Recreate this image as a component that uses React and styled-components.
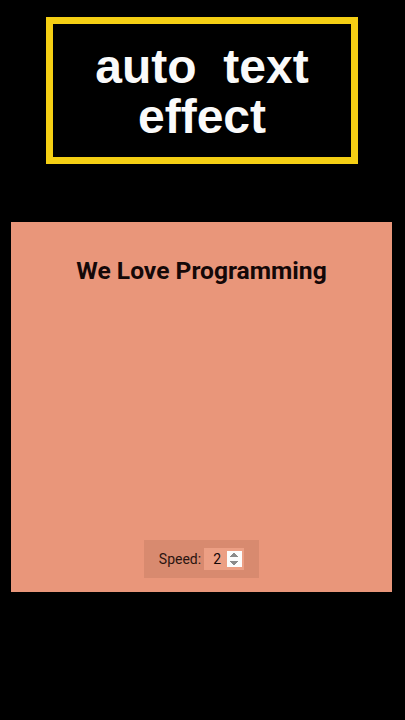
import styled, { createGlobalStyle } from "styled-components";

const GlobalStyle = createGlobalStyle`
  html, body {
    margin: 0;
    padding: 0;
    background: #000;
  }
  body {
    font-family: Roboto, "Liberation Sans", sans-serif;
  }
`;

const Page = styled.div`
  width: 405px;
  height: 720px;
  background: #000;
  display: flex;
  flex-direction: column;
  align-items: flex-start;
  overflow: hidden;
`;

const Banner = styled.div`
  box-sizing: border-box;
  margin: 17px 0 0 46px;
  width: 312px;
  height: 147px;
  border: 7px solid #f5cf14;
  display: flex;
  align-items: center;
  justify-content: center;
  padding-top: 3px;
`;

const BannerText = styled.h1`
  margin: 0;
  color: #fafafa;
  font-family: "Liberation Sans", Arial, sans-serif;
  font-weight: 700;
  font-size: 48px;
  line-height: 50px;
  text-align: center;
  white-space: pre;
`;

const Panel = styled.div`
  box-sizing: border-box;
  margin: 58px 0 0 11px;
  width: 381px;
  height: 370px;
  background: #e9967a;
  display: flex;
  flex-direction: column;
  align-items: center;
  justify-content: space-between;
  padding: 35px 0 14px;
`;

const Title = styled.h2`
  margin: 0;
  color: #140808;
  font-size: 24.6px;
  font-weight: 700;
  line-height: 28px;
`;

const Controls = styled.div`
  box-sizing: border-box;
  width: 115px;
  height: 38px;
  background: #d88a6f;
  display: flex;
  align-items: center;
  justify-content: center;
  gap: 3px;
  color: #2a1410;
  font-size: 14px;
`;

const SpeedInput = styled.input`
  box-sizing: border-box;
  width: 40px;
  height: 22px;
  border: none;
  background: #ec9f84;
  color: #140808;
  font-family: Roboto, "Liberation Sans", sans-serif;
  font-size: 14px;
  text-align: left;
  padding: 0 2px 0 9px;
  outline: none;
  caret-color: #140808;

  &::-webkit-inner-spin-button {
    opacity: 1;
  }
`;

export default function App() {
  return (
    <Page>
      <GlobalStyle />
      <Banner>
        <BannerText>{"auto  text\neffect"}</BannerText>
      </Banner>
      <Panel>
        <Title>We Love Programming</Title>
        <Controls>
          <label htmlFor="speed">Speed:</label>
          <SpeedInput id="speed" type="number" defaultValue={2} min={1} max={10} autoFocus />
        </Controls>
      </Panel>
    </Page>
  );
}
